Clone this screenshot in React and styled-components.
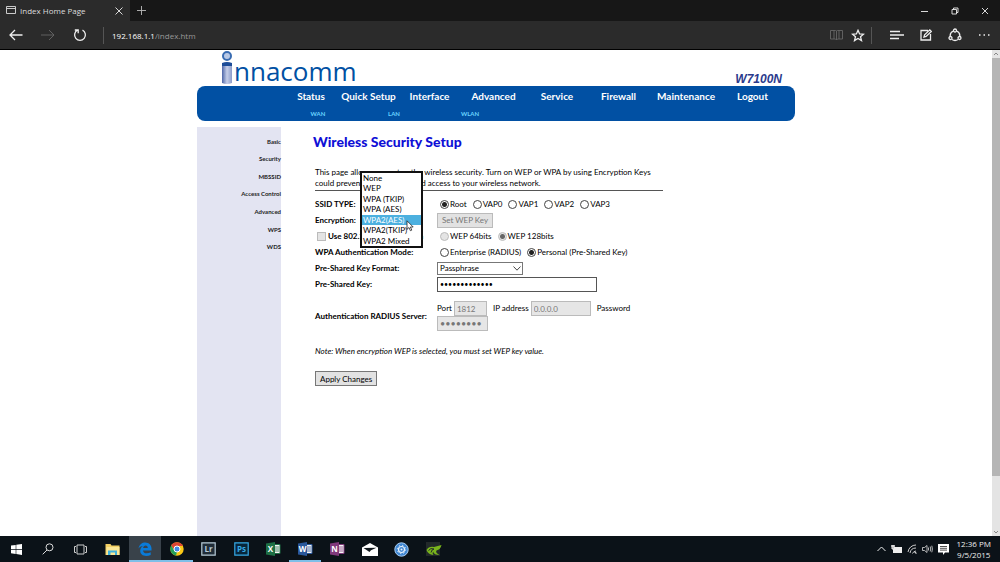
import { useState } from 'react';
import styled, { createGlobalStyle, css } from 'styled-components';

const pageFont = "Lato, 'Liberation Sans', sans-serif";
const chromeFont = "'Open Sans', 'Noto Sans', sans-serif";
const brandBlue = '#0150a3';
const menuBlue = '#e3e4f2';

const mainMenu = ['Status', 'Quick Setup', 'Interface', 'Advanced', 'Service', 'Firewall', 'Maintenance', 'Logout'];
const subMenu = ['WAN', 'LAN', 'WLAN'];
const sideMenu = ['Basic', 'Security', 'MBSSID', 'Access Control', 'Advanced', 'WPS', 'WDS'];
const ssidTypes = ['Root', 'VAP0', 'VAP1', 'VAP2', 'VAP3'];
const encryptions = ['None', 'WEP', 'WPA (TKIP)', 'WPA (AES)', 'WPA2(AES)', 'WPA2(TKIP)', 'WPA2 Mixed'];

const RadioOption = ({ name, label, ...rest }) => (
  <OptionLabel>
    <Radio type="radio" name={name} {...rest} />
    {label}
  </OptionLabel>
);

const EncryptionSelect = () => {
  const [value, setValue] = useState('WPA2(AES)');

  return (
    <SelectAnchor>
      <SmallSelect id="encryption" value={value} onChange={(e) => setValue(e.target.value)}>
        {encryptions.map((item) => (
          <option key={item}>{item}</option>
        ))}
      </SmallSelect>
      <OptionList role="listbox" aria-label="Encryption">
        {encryptions.map((item) => (
          <OptionItem
            key={item}
            role="option"
            aria-selected={item === value}
            $active={item === value}
            onClick={() => setValue(item)}
          >
            {item}
          </OptionItem>
        ))}
      </OptionList>
      <Pointer viewBox="0 0 8 12" aria-hidden="true">
        <path d="M1 .8v8.6l2-1.9 1.4 3.2 1.4-.6-1.4-3.1h2.8z" fill="#fff" stroke="#222" strokeWidth=".8" />
      </Pointer>
    </SelectAnchor>
  );
};

const SecurityForm = () => (
  <Form onSubmit={(e) => e.preventDefault()}>
    <Row>
      <RowLabel>SSID TYPE:</RowLabel>
      <Options>
        {ssidTypes.map((type) => (
          <RadioOption key={type} name="ssid" label={type} defaultChecked={type === 'Root'} />
        ))}
      </Options>
    </Row>
    <Row>
      <SplitLabel>
        <RowLabel as="label" htmlFor="encryption">Encryption:</RowLabel>
        <EncryptionSelect />
      </SplitLabel>
      <div>
        <Button type="button" disabled>Set WEP Key</Button>
      </div>
    </Row>
    <Row>
      <CheckLabel>
        <Checkbox type="checkbox" disabled />
        Use 802.1x Authentication
      </CheckLabel>
      <Options>
        <RadioOption name="wep" label="WEP 64bits" disabled />
        <RadioOption name="wep" label="WEP 128bits" disabled defaultChecked />
      </Options>
    </Row>
    <Row>
      <RowLabel>WPA Authentication Mode:</RowLabel>
      <Options>
        <RadioOption name="auth" label="Enterprise (RADIUS)" />
        <RadioOption name="auth" label="Personal (Pre-Shared Key)" defaultChecked />
      </Options>
    </Row>
    <Row>
      <RowLabel as="label" htmlFor="format">Pre-Shared Key Format:</RowLabel>
      <FormatBox>
        <FormatSelect id="format" defaultValue="Passphrase">
          <option>Passphrase</option>
          <option>Hex (64 characters)</option>
        </FormatSelect>
        <Chevron viewBox="0 0 8 5" aria-hidden="true">
          <path d="M.5.5 4 4.2 7.5.5" fill="none" stroke="#333" strokeWidth=".9" />
        </Chevron>
      </FormatBox>
    </Row>
    <Row>
      <RowLabel as="label" htmlFor="psk">Pre-Shared Key:</RowLabel>
      <KeyInput id="psk" type="password" defaultValue="passphrase123" />
    </Row>
    <ServerRow>
      <RowLabel>Authentication RADIUS Server:</RowLabel>
      <ServerFields>
        <label htmlFor="port">Port</label>
        <PortInput id="port" defaultValue="1812" disabled />
        <AddressLabel htmlFor="ip">IP address</AddressLabel>
        <AddressInput id="ip" defaultValue="0.0.0.0" disabled />
        <PasswordLabel htmlFor="radius-password">Password</PasswordLabel>
        <SecretInput id="radius-password" type="password" defaultValue="password" disabled />
      </ServerFields>
    </ServerRow>
    <Note>Note: When encryption WEP is selected, you must set WEP key value.</Note>
    <div>
      <Button type="submit">Apply Changes</Button>
    </div>
  </Form>
);

const LogoMark = () => (
  <svg width="12" height="34" viewBox="0 0 12 34" aria-hidden="true">
    <defs>
      <linearGradient id="stem">
        <stop offset="0" stopColor="#4e66a8" />
        <stop offset=".5" stopColor="#c5cee8" />
        <stop offset="1" stopColor="#8c9cca" />
      </linearGradient>
    </defs>
    <circle cx="6" cy="5" r="4" fill="#b9c9e6" stroke="#396cb2" strokeWidth="2" />
    <path d="M1 14v18q5 2 10 0V14z" fill="url(#stem)" />
    <path d="M1 12q5-2 10 0v3H1z" fill="#1c4c98" />
  </svg>
);

const Browser = () => (
  <header>
    <TitleBar>
      <Tab>
        <Glyph width="10" height="9" viewBox="0 0 10 9">
          <path d="M.5.5h9v7h-9zM.5 2.5h9" />
        </Glyph>
        <TabTitle>Index Home Page</TabTitle>
        <IconButton aria-label="Close tab">
          <Glyph width="8" height="8" viewBox="0 0 8 8"><path d="m.5.5 7 7m0-7-7 7" /></Glyph>
        </IconButton>
      </Tab>
      <NewTab aria-label="New tab">
        <Glyph width="9" height="9" viewBox="0 0 9 9"><path d="M4.5 0v9M0 4.5h9" /></Glyph>
      </NewTab>
      <WindowButtons>
        <IconButton aria-label="Minimize">
          <Glyph width="8" height="8" viewBox="0 0 8 8"><path d="M0 4.5h7" /></Glyph>
        </IconButton>
        <IconButton aria-label="Restore">
          <Glyph width="8" height="8" viewBox="0 0 8 8"><path d="M1 2.5h4.5V7H1zM2.5 2.5V1H7v4.5H5.5" /></Glyph>
        </IconButton>
        <IconButton aria-label="Close">
          <Glyph width="8" height="8" viewBox="0 0 8 8"><path d="m1 1 6 6m0-6L1 7" /></Glyph>
        </IconButton>
      </WindowButtons>
    </TitleBar>
    <ToolBar>
      <HistoryButtons>
        <IconButton aria-label="Back" $wide>
          <Glyph width="14" height="12" viewBox="0 0 14 12" $bold><path d="M13.5 6H1m5-5L1 6l5 5" /></Glyph>
        </IconButton>
        <IconButton aria-label="Forward" $wide $dim>
          <Glyph width="14" height="12" viewBox="0 0 14 12"><path d="M0 6h13M8 1l5 5-5 5" /></Glyph>
        </IconButton>
        <IconButton aria-label="Refresh" $wide>
          <Glyph width="14" height="14" viewBox="0 0 14 14" $bold>
            <path d="M9.5 2.2a5.4 5.4 0 1 1-5 0M1.8 2h3.4v3.2" />
          </Glyph>
        </IconButton>
      </HistoryButtons>
      <Divider />
      <Address>192.168.1.1<span>/index.htm</span></Address>
      <PageButtons>
        <IconButton aria-label="Reading view" $dim>
          <Glyph width="13" height="12" viewBox="0 0 13 12">
            <path d="M.5 1.5h5l1 .5 1-.5h5V10h-5l-1 1-1-1h-5zM6.500 2v9M4 1.500V10m5-8.500V10" />
          </Glyph>
        </IconButton>
        <IconButton aria-label="Add to favorites">
          <Glyph width="14" height="13" viewBox="0 0 14 13" $bold>
            <path d="m7 1.300 1.600 3.600 3.900.3-3 2.500 1 3.900L7 9.500l-3.500 2.100 1-3.900-3-2.500 3.900-.3z" />
          </Glyph>
        </IconButton>
      </PageButtons>
      <Divider />
      <ToolButtons>
        <IconButton aria-label="Hub">
          <Glyph width="14" height="10" viewBox="0 0 14 10" $bold><path d="M0 1.500h10M0 5h14M0 8.500h9" /></Glyph>
        </IconButton>
        <IconButton aria-label="Make a web note">
          <Glyph width="12" height="12" viewBox="0 0 12 12" $bold>
            <path d="M8 1.500H1v9.500h9.500V5M4 8l.6-2.200L9.800.9l1.500 1.500-5.200 5z" />
          </Glyph>
        </IconButton>
        <IconButton aria-label="Share">
          <Glyph width="14" height="14" viewBox="0 0 14 14" $bold>
            <circle cx="7" cy="2.500" r="1.500" />
            <circle cx="2.500" cy="10" r="1.500" />
            <circle cx="11.500" cy="10" r="1.500" />
            <path d="M5.500 3A5 5 0 0 0 2.300 8.500M8.500 3a5 5 0 0 1 3.200 5.500M4 11.500q3 2 6 0" />
          </Glyph>
        </IconButton>
        <IconButton aria-label="More">
          <Glyph width="13" height="4" viewBox="0 0 13 4" $bold><path d="M1 2h1.500m3 0H7m3 0h1.500" /></Glyph>
        </IconButton>
      </ToolButtons>
    </ToolBar>
  </header>
);

const OfficeIcon = ({ letter, color }) => (
  <svg width="15" height="14" viewBox="0 0 15 14">
    <path d="M8 2.500h6v9H8z" fill="#f5f5f5" stroke={color} />
    <path d="M9 5h4M9 7h4M9 9h4" stroke={color} strokeWidth=".8" />
    <path d="M0 1.500 9 0v14l-9-1.500z" fill={color} />
    <AppLetter x="4.500" y="10" fill="#fff">{letter}</AppLetter>
  </svg>
);

const AdobeIcon = ({ letters, color, background }) => (
  <svg width="15" height="14" viewBox="0 0 15 14">
    <path d="M.8.8h13.400v12.400H.8z" fill={background} stroke={color} strokeWidth="1.200" />
    <AppLetter x="7.500" y="10" fill={color}>{letters}</AppLetter>
  </svg>
);

const taskApps = [
  {
    name: 'Start',
    icon: (
      <svg width="11" height="11" viewBox="0 0 11 11">
        <path d="M0 1.600 4.700.9v4.200H0zM5.300.8 11 0v5.100H5.300zM0 5.700h4.700v4.200L0 9.300zM5.300 5.700H11V11l-5.700-.9z" fill="#fff" />
      </svg>
    ),
  },
  {
    name: 'Search',
    icon: (
      <svg width="12" height="12" viewBox="0 0 12 12" fill="none" stroke="#ddd">
        <circle cx="7.500" cy="4.300" r="3.500" />
        <path d="M5 7 .7 11.300" />
      </svg>
    ),
  },
  {
    name: 'Task View',
    icon: (
      <svg width="13" height="11" viewBox="0 0 13 11" fill="none" stroke="#ccc">
        <path d="M3 1h7v9H3zM2 2.500H.5v6H2M11 2.500h1.500v6H11" />
      </svg>
    ),
  },
  {
    name: 'File Explorer',
    icon: (
      <svg width="15" height="13" viewBox="0 0 15 13">
        <path d="M.5 1h5l1 1.500h8V12H.5z" fill="#f2cf63" />
        <path d="M1.500 4h13v8h-13z" fill="#fbe795" />
        <path d="M3 12V7.500h9V12h-2V9.500H5.500V12z" fill="#3fb2dc" />
      </svg>
    ),
  },
  {
    name: 'Edge',
    open: true,
    active: true,
    icon: (
      <svg width="14" height="14" viewBox="0 0 14 14">
        <path
          d="M.5 6.500C1.500 2.200 4 .5 7.300.5c3.800 0 6.200 2.800 6.200 6v1.900H5c.2 2 1.800 2.800 3.800 2.800 1.500 0 2.800-.4 3.900-1v2.700c-1.300.7-2.800 1-4.500 1-3.600 0-6-2-6-5.200 0-2 1.100-3.800 2.900-4.700C2.900 4.300 1.500 5 .5 6.500zm4.600-.6h4.700c0-1.600-.8-2.500-2.200-2.500-1.300 0-2.300.9-2.500 2.500z"
          fill="#0a7bd8"
          fillRule="evenodd"
        />
      </svg>
    ),
  },
  {
    name: 'Chrome',
    open: true,
    icon: (
      <svg width="14" height="14" viewBox="0 0 14 14">
        <circle cx="7" cy="7" r="6.700" fill="#fbc816" />
        <path d="M1.200 3.600A6.700 6.700 0 0 1 12.900 4H7L4.300 8z" fill="#dd4535" />
        <path d="M1.200 3.600 4.300 8.500 7 10l-1 3.600A6.700 6.700 0 0 1 1.200 3.600z" fill="#25a05a" />
        <circle cx="7" cy="7" r="3" fill="#4489e8" stroke="#fff" />
      </svg>
    ),
  },
  { name: 'Lightroom', icon: <AdobeIcon letters="Lr" color="#b7cbd8" background="#202d38" /> },
  { name: 'Photoshop', icon: <AdobeIcon letters="Ps" color="#36a9e5" background="#07263b" /> },
  { name: 'Excel', icon: <OfficeIcon letter="X" color="#1e7045" /> },
  { name: 'Word', open: true, icon: <OfficeIcon letter="W" color="#2a579a" /> },
  { name: 'OneNote', icon: <OfficeIcon letter="N" color="#80397b" /> },
  {
    name: 'Mail',
    icon: (
      <svg width="16" height="13" viewBox="0 0 16 13">
        <path d="M0 4.500 8 0l8 4.500V13H0z" fill="#fff" />
        <path d="m1.500 5 13-.2L9 7.300 7.500 9z" fill="#10171c" />
      </svg>
    ),
  },
  {
    name: 'Settings',
    icon: (
      <svg width="15" height="15" viewBox="0 0 15 15" fill="none">
        <circle cx="7.500" cy="7.500" r="6.700" fill="#3f86d2" stroke="#a8cdf2" />
        <circle cx="7.500" cy="7.500" r="3" stroke="#e6f1fc" strokeWidth="1.200" />
        <circle cx="7.500" cy="7.500" r="4.200" stroke="#e6f1fc" strokeWidth="1" strokeDasharray="1.300 2" />
        <circle cx="7.500" cy="7.500" r="1" fill="#e6f1fc" />
      </svg>
    ),
  },
  {
    name: 'GeForce Experience',
    icon: (
      <svg width="16" height="14" viewBox="0 0 16 14">
        <path d="M0 0h14v14H0z" fill="#22292a" />
        <path d="M.5 8Q3 4 8 5l7.500-2q-1 4.500-5 5.500-1.500 2 3 4.500-5.500 0-6.500-3.500-1 2 .5 3.500Q2 12.500.5 8z" fill="#79b51c" />
        <path d="M2.500 8.500q2-3 5.500-1.500-2.500.5-3 3.500" fill="none" stroke="#22292a" />
      </svg>
    ),
  },
];

const TaskBar = () => (
  <Task>
    <TaskApps>
      {taskApps.map(({ name, icon, open, active }) => (
        <TaskButton key={name} aria-label={name} $open={open} $active={active}>
          {icon}
        </TaskButton>
      ))}
    </TaskApps>
    <Tray>
      <svg width="9" height="6" viewBox="0 0 9 6"><path d="m.5 5 4-4 4 4" fill="none" stroke="#eee" /></svg>
      <svg width="11" height="8" viewBox="0 0 11 8">
        <path d="M2 2h9v6H2z" fill="#eee" />
        <path d="M0 1h4M1 0v4h2V0" stroke="#eee" fill="#999" />
      </svg>
      <svg width="10" height="10" viewBox="0 0 10 10" fill="none" stroke="#ccc">
        <path d="M1 8a8 8 0 0 1 8-7M3 9a6 6 0 0 1 6-5M5.500 9.500A4 4 0 0 1 9 7" />
        <path d="M7.500 8.500h1.500v1.500" />
      </svg>
      <svg width="11" height="8" viewBox="0 0 11 8" fill="none" stroke="#ddd" strokeWidth=".8">
        <path d="M.5 2.500h2L5 .5v7L2.500 5.500h-2zM6.500 2.500v3M8.200 1.500q1 2.500 0 5M9.800.7q1.200 3.300 0 6.600" />
      </svg>
      <svg width="11" height="11" viewBox="0 0 11 11">
        <path d="M0 0h11v8.500H7L5 11V8.500H0z" fill="#fff" />
        <path d="M2 2.500h7M2 4.300h7M2 6.100h7" stroke="#222" strokeWidth=".8" />
      </svg>
      <Clock>
        <time>12:36 PM</time>
        <time>9/5/2015</time>
      </Clock>
    </Tray>
  </Task>
);

const App = () => (
  <Screen>
    <GlobalStyle />
    <Browser />
    <Viewport>
      <Page>
        <Brand>
          <Logo href="#home" aria-label="innacomm">
            <LogoMark />
            <LogoText>nnacomm</LogoText>
          </Logo>
          <Model>W7100N</Model>
        </Brand>
        <Nav>
          <MainMenu>
            {mainMenu.map((item) => (
              <MainLink key={item} href="#menu">{item}</MainLink>
            ))}
          </MainMenu>
          <SubMenu>
            {subMenu.map((item) => (
              <SubLink key={item} href="#submenu">{item}</SubLink>
            ))}
          </SubMenu>
        </Nav>
        <Columns>
          <Side>
            <SideMenu>
              {sideMenu.map((item) => (
                <SideLink key={item} href="#side">{item}</SideLink>
              ))}
            </SideMenu>
          </Side>
          <Content>
            <Title>Wireless Security Setup</Title>
            <Body>
              <Intro>
                This page allows you setup the wireless security. Turn on WEP or WPA by using Encryption Keys
                could prevent any unauthorized access to your wireless network.
              </Intro>
              <SecurityForm />
            </Body>
          </Content>
        </Columns>
      </Page>
      <ScrollBar aria-hidden="true">
        <ScrollArrow viewBox="0 0 8 8"><path d="m2 5 2-2 2 2" /></ScrollArrow>
        <Thumb />
        <ScrollArrow viewBox="0 0 8 8"><path d="m2 3 2 2 2-2" /></ScrollArrow>
      </ScrollBar>
    </Viewport>
    <TaskBar />
  </Screen>
);

export default App;

const GlobalStyle = createGlobalStyle`
  * {
    box-sizing: border-box;
  }

  body {
    margin: 0;
    background: #fff;
  }

  button, input, select {
    font: inherit;
    margin: 0;
  }
`;

const Screen = styled.div`
  height: 100vh;
  display: flex;
  flex-direction: column;
  overflow: hidden;
  font-family: ${chromeFont};
`;

const TitleBar = styled.div`
  display: flex;
  height: 21px;
  background: #171717;
`;

const Tab = styled.div`
  display: flex;
  align-items: center;
  width: 130px;
  padding-left: 6px;
  background: #2b2b2b;
  color: #ddd;
  font-size: 8px;
`;

const TabTitle = styled.span`
  flex: 1;
  padding-left: 4px;
`;

const IconButton = styled.button`
  display: flex;
  align-items: center;
  justify-content: center;
  width: ${({ $wide }) => ($wide ? 32 : 22)}px;
  padding: 0;
  border: 0;
  background: none;
  color: ${({ $dim }) => ($dim ? '#666' : '#eee')};
`;

const NewTab = styled(IconButton)`
  color: #bbb;
`;

const Glyph = styled.svg`
  fill: none;
  stroke: currentColor;
  stroke-width: ${({ $bold }) => ($bold ? 1.3 : 0.9)};
`;

const WindowButtons = styled.div`
  display: flex;
  gap: 8px;
  margin-left: auto;
  padding-right: 4px;
`;

const ToolBar = styled.div`
  display: flex;
  align-items: center;
  height: 29px;
  background: #2b2b2b;
  border-bottom: 1px solid #000;
`;

const HistoryButtons = styled.div`
  display: flex;
  padding-right: 7px;
`;

const Divider = styled.span`
  width: 1px;
  height: 17px;
  background: #555;
`;

const Address = styled.div`
  flex: 1;
  padding-left: 8px;
  color: #fff;
  font-size: 8px;

  span {
    color: #999;
  }
`;

const PageButtons = styled.div`
  display: flex;
  padding-right: 2px;
`;

const ToolButtons = styled.div`
  display: flex;
  gap: 7px;
  padding: 0 5px 0 14px;
`;

const Viewport = styled.main`
  flex: 1;
  min-height: 0;
  display: flex;
  background: #fff;
  color: #000;
  font-family: ${pageFont};
  font-size: 8px;
`;

const Page = styled.div`
  flex: 1;
  display: flex;
  flex-direction: column;
  max-width: 598px;
  margin: 0 auto;
`;

const Brand = styled.div`
  display: flex;
  align-items: flex-end;
  justify-content: space-between;
  height: 36px;
  padding: 0 13px 0 24px;
`;

const Logo = styled.a`
  display: flex;
  align-items: flex-end;
  gap: 1px;
  height: 36px;
  padding-bottom: 1px;
  text-decoration: none;
`;

const LogoText = styled.span`
  color: ${brandBlue};
  font-family: ${chromeFont};
  font-size: 26px;
  line-height: 28px;
`;

const Model = styled.strong`
  color: #2b3a8c;
  font: italic bold 12px/14px 'Liberation Sans', sans-serif;
`;

const Nav = styled.nav`
  height: 35px;
  border-radius: 8px;
  background: ${brandBlue};
`;

const MainMenu = styled.div`
  display: grid;
  grid-template-columns: 56fr 59fr 63fr 65fr 62fr 61fr 74fr 59fr;
  padding: 3px 13px 0 86px;
  text-align: center;
`;

const MainLink = styled.a`
  color: #fff;
  font-size: 10px;
  font-weight: bold;
  line-height: 14px;
  text-decoration: none;
  white-space: nowrap;
`;

const SubMenu = styled.div`
  display: grid;
  grid-template-columns: repeat(3, 76px);
  padding: 6px 0 0 83px;
  text-align: center;
`;

const SubLink = styled.a`
  color: #6ad4ff;
  font-size: 6px;
  font-weight: bold;
  line-height: 10px;
  text-decoration: none;
`;

const Columns = styled.div`
  flex: 1;
  display: flex;
  gap: 32px;
  padding-top: 6px;
`;

const Side = styled.aside`
  width: 84px;
  padding-top: 6px;
  background: ${menuBlue};
`;

const SideMenu = styled.nav`
  display: grid;
  grid-auto-rows: 1fr;
  align-items: center;
  height: 123px;
  text-align: right;
`;

const SideLink = styled.a`
  color: #222;
  font-size: 6px;
  font-weight: bold;
  line-height: 16px;
  text-decoration: none;
`;

const Content = styled.section`
  flex: 1;
  max-width: 350px;
`;

const Title = styled.h1`
  margin: 5px 0 0;
  color: #0f0fd6;
  font-size: 14px;
  font-weight: 900;
  line-height: 20px;
`;

const Body = styled.div`
  padding-left: 2px;
`;

const Intro = styled.p`
  margin: 15px 0 5px;
  padding-bottom: 1px;
  border-bottom: 1px solid #555;
  line-height: 11px;
`;

const Form = styled.form`
  line-height: 11px;
`;

const Row = styled.div`
  display: grid;
  grid-template-columns: 122px 1fr;
  align-items: center;
  height: 16px;
`;

const RowLabel = styled.span`
  font-weight: bold;
  white-space: nowrap;
`;

const SplitLabel = styled.div`
  display: grid;
  grid-template-columns: 45px 1fr;
  align-items: center;
`;

const Options = styled.div`
  display: flex;
  gap: 6px;
  padding-left: 3px;
`;

const OptionLabel = styled.label`
  display: flex;
  align-items: center;
  gap: 1px;
  white-space: nowrap;
`;

const Radio = styled.input`
  appearance: none;
  width: 9px;
  height: 9px;
  border: 1px solid #444;
  border-radius: 50%;
  background: #fff;

  &:checked {
    background: radial-gradient(circle, #222 0 2px, #fff 3px);
  }

  &:disabled {
    border-color: #bbb;
    background: #e4e4e4;
  }

  &:disabled:checked {
    background: radial-gradient(circle, #666 0 2px, #e4e4e4 3px);
  }
`;

const CheckLabel = styled.label`
  display: flex;
  align-items: center;
  gap: 2px;
  padding-left: 2px;
  font-weight: bold;
  white-space: nowrap;
`;

const Checkbox = styled.input`
  appearance: none;
  width: 9px;
  height: 9px;
  border: 1px solid #bbb;
  background: #e4e4e4;
`;

const Button = styled.button`
  display: block;
  height: 15px;
  padding: 0 4px;
  border: 1px solid #777;
  background: #e2e2e2;
  color: #000;
  line-height: 12px;

  &:disabled {
    border-color: #bbb;
    color: #777;
  }
`;

const SelectAnchor = styled.div`
  position: relative;
`;

const SmallSelect = styled.select`
  display: block;
  appearance: none;
  width: 62px;
  height: 14px;
  padding: 0 2px;
  border: 1px solid #888;
  background: #fff;
`;

const OptionList = styled.div`
  position: absolute;
  z-index: 1;
  top: -42px;
  left: 0;
  display: grid;
  grid-auto-rows: 1fr;
  width: 63px;
  height: 77px;
  border: 2px solid #111;
  background: #fff;
`;

const OptionItem = styled.div`
  padding-left: 1px;
  line-height: 10px;
  white-space: nowrap;
  ${({ $active }) =>
    $active &&
    css`
      background: #4cb0df;
      color: #fff;
    `}
`;

const Pointer = styled.svg`
  position: absolute;
  z-index: 2;
  top: 7px;
  left: 46px;
  width: 8px;
  height: 12px;
`;

const FormatBox = styled.div`
  position: relative;
  width: 86px;
`;

const FormatSelect = styled.select`
  display: block;
  appearance: none;
  width: 100%;
  height: 13px;
  padding: 0 2px;
  border: 1px solid #777;
  background: #fff;
`;

const Chevron = styled.svg`
  position: absolute;
  top: 4px;
  right: 2px;
  width: 8px;
  height: 5px;
`;

const TextInput = styled.input`
  height: 15px;
  padding: 0 2px;
  border: 1px solid #555;
  background: #fff;

  &:disabled {
    border-color: #bbb;
    background: #e6e6e6;
    color: #777;
  }
`;

const KeyInput = styled(TextInput)`
  width: 160px;
  font-size: 7px;
`;

const ServerRow = styled.div`
  display: grid;
  grid-template-columns: 122px 1fr;
  align-items: center;
  padding: 9px 0 15px;
`;

const ServerFields = styled.div`
  display: flex;
  flex-wrap: wrap;
  align-items: center;
`;

const PortInput = styled(TextInput)`
  width: 33px;
  margin-left: 2px;
`;

const AddressLabel = styled.label`
  padding: 0 2px 0 6px;
`;

const AddressInput = styled(TextInput)`
  width: 60px;
`;

const PasswordLabel = styled.label`
  padding-left: 6px;
`;

const SecretInput = styled(TextInput)`
  width: 51px;
  font-size: 9px;
`;

const Note = styled.p`
  margin: 0 0 14px;
  font-style: italic;
`;

const ScrollBar = styled.div`
  display: flex;
  flex-direction: column;
  width: 8px;
  background: #e4e4e4;
`;

const ScrollArrow = styled.svg`
  width: 8px;
  height: 8px;
  fill: none;
  stroke: #888;
`;

const Thumb = styled.div`
  height: 418px;
  margin-bottom: auto;
  background: #b5b5b5;
`;

const Task = styled.footer`
  display: flex;
  justify-content: space-between;
  height: 26px;
  background: #0b1218;
`;

const TaskApps = styled.div`
  display: grid;
  grid-template-columns: repeat(14, 1fr);
  width: 450px;
`;

const TaskButton = styled.button`
  display: flex;
  align-items: center;
  justify-content: center;
  padding: 0;
  border: 0;
  border-bottom: 2px solid ${({ $open }) => ($open ? '#7fbfe8' : 'transparent')};
  border-top: 2px solid transparent;
  background: ${({ $active }) => ($active ? '#39424a' : 'none')};
`;

const AppLetter = styled.text`
  font: bold 8px ${chromeFont};
  text-anchor: middle;
`;

const Tray = styled.div`
  display: flex;
  align-items: center;
  gap: 5px;
  padding-right: 9px;
`;

const Clock = styled.div`
  display: flex;
  flex-direction: column;
  align-items: center;
  padding-left: 3px;
  color: #eee;
  font-size: 8px;
  line-height: 11px;
`;
